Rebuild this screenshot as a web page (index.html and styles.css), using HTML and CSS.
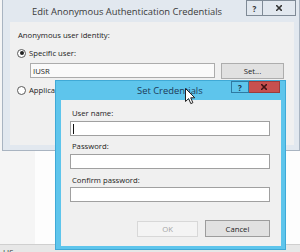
FILE: index.html
```html
<!DOCTYPE html>
<html lang="en">
<head>
<meta charset="utf-8">
<title>Set Credentials</title>
<link rel="stylesheet" href="styles.css">
</head>
<body>
<div class="desktop">
  <div class="backdrop">
    <div class="bg-main"><div class="bg-strip"></div><div class="bg-fill"></div></div>
    <div class="bg-bar">LIS</div>
  </div>

  <section class="win win-outer">
    <header class="titlebar">
      <span class="title">Edit Anonymous Authentication Credentials</span>
      <div class="caption">
        <span class="cap-btn cap-help">?</span>
        <span class="cap-btn cap-close"><svg class="x-icon" viewBox="0 0 6 6"><path d="M0.6 0.6 L5.4 5.4 M5.4 0.6 L0.6 5.4"/></svg></span>
      </div>
    </header>
    <div class="client">
      <div class="label">Anonymous user identity:</div>
      <div class="radio-row"><span class="radio checked"></span><span>Specific user:</span></div>
      <div class="user-row">
        <div class="field field-iusr">IUSR</div>
        <div class="btn btn-set">Set...</div>
      </div>
      <div class="radio-row radio-row-app"><span class="radio"></span><span>Application pool identity</span></div>
    </div>
  </section>

  <section class="win win-inner">
    <header class="titlebar">
      <span class="title">Set Credentials</span>
      <div class="caption">
        <span class="cap-btn cap-help">?</span>
        <span class="cap-btn cap-close"><svg class="x-icon" viewBox="0 0 6 6"><path d="M0.6 0.6 L5.4 5.4 M5.4 0.6 L0.6 5.4"/></svg></span>
      </div>
    </header>
    <div class="client">
      <div class="cred-label">User name:</div>
      <div class="field cred-field f1"><span class="caret"></span></div>
      <div class="cred-label l2">Password:</div>
      <div class="field cred-field f2"></div>
      <div class="cred-label l3">Confirm password:</div>
      <div class="field cred-field f3"></div>
      <div class="actions">
        <div class="btn btn-ok">OK</div>
        <div class="btn btn-cancel">Cancel</div>
      </div>
    </div>
  </section>

  <svg class="cursor" viewBox="0 0 11 17"><path d="M0.5 0.5 L0.5 13.5 L3.6 10.6 L5.8 15.6 L7.9 14.7 L5.7 9.8 L9.8 9.8 Z"/></svg>
</div>
</body>
</html>
```

FILE: styles.css
```css
* { box-sizing: border-box; }

body {
  margin: 0;
  width: 300px;
  height: 252px;
  overflow: hidden;
  font-family: "Open Sans", "Noto Sans", sans-serif;
  font-size: 7.7px;
  color: #222;
}

.desktop {
  position: relative;
  width: 300px;
  height: 252px;
  overflow: hidden;
  background: #fcfcfc;
}

/* background application */
.backdrop { display: flex; flex-direction: column; height: 100%; }
.bg-main { flex: 1; display: flex; }
.bg-strip { width: 35px; background: #f5f5f5; }
.bg-fill { flex: 1; background: #fdfdfd; }
.bg-bar {
  height: 8px;
  border-top: 1px solid #cfcfcf;
  background: #e7e7e7;
  padding: 3px 0 0 3px;
  line-height: 8px;
  color: #333;
}

/* windows */
.win { position: absolute; display: flex; flex-direction: column; }
.titlebar { display: flex; align-items: flex-start; flex: none; }
.caption { margin-left: auto; display: flex; }
.cap-btn {
  display: flex;
  align-items: center;
  justify-content: center;
  font-weight: 700;
  font-size: 8px;
}
.x-icon { width: 6px; height: 6px; }
.x-icon path { fill: none; stroke-width: 1.5; stroke-linecap: square; }
.client { flex: 1; background: #f0f0f0; }

/* outer (inactive) dialog */
.win-outer {
  left: 2px;
  top: -1px;
  width: 298px;
  height: 152px;
  background: #e2e8ef;
  border: 1px solid #a9b4c1;
}
.win-outer .titlebar { height: 22px; padding-right: 3px; }
.win-outer .title {
  padding: 2px 0 0 29px;
  line-height: 20px;
  font-size: 9.4px;
  color: #3a3a3a;
}
.win-outer .cap-btn { height: 16px; border: 1px solid #7f8a96; color: #333; }
.win-outer .cap-help { width: 17px; }
.win-outer .cap-close { width: 34px; margin-left: -1px; }
.win-outer .x-icon path { stroke: #333; }
.win-outer .client { margin: 0 5px 5px 7px; padding: 8px 0 0 8px; }

.label { line-height: 10px; height: 10px; }
.radio-row { display: flex; align-items: center; height: 10px; gap: 3px; margin-top: 8px; margin-left: -1px; }
.radio-row-app { margin-top: 6px; white-space: nowrap; }
.radio {
  width: 9px;
  height: 9px;
  border-radius: 50%;
  border: 1px solid #5a5a5a;
  background: #fff;
  display: flex;
  align-items: center;
  justify-content: center;
}
.radio.checked::after {
  content: "";
  width: 4px;
  height: 4px;
  border-radius: 50%;
  background: #222;
}
.user-row { display: flex; align-items: flex-start; margin-top: 5px; padding-left: 12px; }

.field {
  background: #fff;
  border: 1px solid #a5a5a5;
  display: flex;
  align-items: center;
  padding-left: 2px;
}
.field-iusr { width: 185px; height: 15px; background: #fafafa; border-color: #acacac; }

.btn {
  height: 16px;
  background: #e1e1e1;
  border: 1px solid #adadad;
  display: flex;
  align-items: center;
  justify-content: center;
}
.btn-set { width: 63px; margin-left: 6px; }

/* inner (active) dialog */
.win-inner {
  left: 55px;
  top: 80px;
  width: 231px;
  height: 170px;
  background: #5ec5ec;
  border: 1px solid #3fa9d6;
}
.win-inner .titlebar { height: 19px; padding-right: 5px; }
.win-inner .title {
  padding-left: 81px;
  line-height: 19px;
  font-size: 9.4px;
  color: #1d3a58;
}
.win-inner .cap-btn { height: 12px; }
.win-inner .cap-help { width: 18px; border: 1px solid #2f7aa3; color: #1c3550; }
.win-inner .cap-close { width: 31px; background: #c7504f; border: 1px solid #9c3c3c; border-left: none; }
.win-inner .x-icon path { stroke: #3d1414; }
.win-inner .client {
  margin: 0 4px 3px 5px;
  padding: 8px 11px 0 9px;
  display: flex;
  flex-direction: column;
}

.cred-label { line-height: 10px; height: 10px; padding-left: 2px; }
.cred-field { height: 15px; border-color: #a0a0a0; }
.f1 { margin-top: 3px; }
.l2 { margin-top: 5px; }
.f2 { margin-top: 3px; }
.l3 { margin-top: 6px; }
.f3 { margin-top: 2px; }
.caret { width: 1px; height: 10px; background: #111; }

.actions { display: flex; justify-content: flex-end; gap: 7px; margin-top: 19px; }
.btn-ok { width: 61px; background: #f4f4f4; border-color: #d8d8d8; color: #a5a5a5; }
.btn-cancel { width: 65px; height: 17px; margin-top: -1px; border-color: #9d9d9d; }

/* mouse pointer over the title bar */
.cursor { position: absolute; left: 185px; top: 88px; width: 11px; height: 17px; }
.cursor path { fill: #fff; stroke: #222; stroke-width: 1; stroke-linejoin: round; }
```
